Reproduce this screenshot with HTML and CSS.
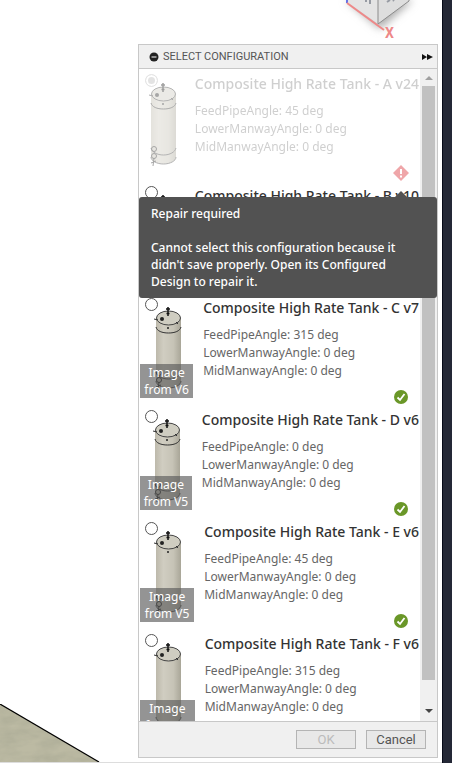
FILE: index.html
```
<!DOCTYPE html>
<html lang="en">

<head>
    <meta charset="UTF-8" />
    <meta name="viewport" content="width=device-width, initial-scale=1.0" />
    <title>Select Configuration</title>
    <link rel="stylesheet" href="styles.css">
</head>

<body>
    <!-- Shared shapes -->
    <svg class="defs" aria-hidden="true">
        <defs>
            <linearGradient id="metal">
                <stop offset="0" stop-color="#bdb9ab" />
                <stop offset="0.3" stop-color="#d0cdc1" />
                <stop offset="0.7" stop-color="#c6c3b6" />
                <stop offset="1" stop-color="#a9a698" />
            </linearGradient>
            <symbol id="tank" viewBox="0 0 32 86">
                <path d="M5 12v63c0 4 6 7 12.500 7S30 79 30 75V12z" fill="url(#metal)" />
                <path d="M5 75c0 4 6 7 12.500 7S30 79 30 75" fill="none" stroke="#444" />
                <ellipse cx="17.500" cy="12" rx="12" ry="7" fill="#cfcdc1" stroke="#444" stroke-width="1" />
                <path d="M17 1v9M15 3h4M15.500 7.500h3" stroke="#111" stroke-width="1.500" />
                <circle cx="11" cy="13" r="2" fill="#222" />
                <path d="M3 13l4 1M25 16l2 2" stroke="#333" />
            </symbol>
            <symbol id="seams" viewBox="0 0 32 86">
                <path d="M5 21c1 4 6 6 12.500 6S29 25 30 21" fill="none" stroke="#333" />
                <path d="M5 66c1 4 6 7 12.500 7S29 70 30 66" fill="none" stroke="#444" />
            </symbol>
            <symbol id="manways" viewBox="0 0 32 86">
                <g fill="none" stroke="#222">
                    <circle cx="8" cy="67" r="2.500" />
                    <circle cx="8" cy="74" r="2.500" />
                    <path d="M8 76l-1 8M5 81l5-2" />
                </g>
                <circle cx="17" cy="22" r="1" fill="#222" />
            </symbol>
            <symbol id="ok" viewBox="0 0 14 14">
                <circle cx="7" cy="7" r="7" fill="#6a9728" />
                <path d="M3.500 7.500l2.500 2.500 4.500-6" fill="none" stroke="#fff" stroke-width="1.800" />
            </symbol>
        </defs>
    </svg>

    <main class="viewport">
        <svg class="view-cube" width="84" height="50" viewBox="0 0 84 50">
            <defs>
                <filter id="soft" x="-30%" y="-30%" width="160%" height="160%">
                    <feGaussianBlur stdDeviation="4" />
                </filter>
            </defs>
            <path d="M10 0L44 29 77 0z" fill="#aaa" filter="url(#soft)" />
            <path d="M11 0v2l31 22V0z" fill="#e4e4e4" />
            <path d="M42 0v24L73 1V0z" fill="#dedede" />
            <path d="M42 0v24L73 1V0" fill="none" stroke="#8c8c8c" />
            <path d="M30 0v2M34 0v4M51 2l3-2M57 0l1 1" stroke="#979ba3" stroke-width="2" />
            <path d="M11 0v3" stroke="#6672e8" stroke-width="2" />
            <path d="M11 3l37 27" stroke="#ee8888" stroke-width="2" />
            <text x="49" y="38">X</text>
        </svg>

        <svg class="ground" width="100" height="58" viewBox="0 0 100 58">
            <defs>
                <filter id="grain">
                    <feTurbulence type="fractalNoise" baseFrequency="0.05 0.120" numOctaves="3" />
                    <feColorMatrix values="0 0 0 0 0.400  0 0 0 0 0.400  0 0 0 0 0.300  1.200 0 0 0 -0.350" />
                    <feComposite in2="SourceGraphic" operator="in" />
                </filter>
            </defs>
            <path d="M0 0l99 58H0z" fill="#bcbaa3" />
            <path d="M0 0l99 58H0z" filter="url(#grain)" />
            <path d="M0 0l99 58" stroke="#000" stroke-width="1.200" />
        </svg>

        <section class="panel">
            <header class="panel-header">
                <svg width="10" height="10" viewBox="0 0 10 10">
                    <circle cx="5" cy="5" r="4.500" fill="#222" />
                    <path d="M2.500 5h5" stroke="#fff" />
                </svg>
                <h1>SELECT CONFIGURATION</h1>
                <svg class="forward" width="11" height="8" viewBox="0 0 11 8">
                    <path d="M0 1l5 3-5 3zM5 1l6 3-6 3z" fill="#111" />
                </svg>
            </header>

            <div class="panel-body">
                <div class="config-list">
                    <label class="config broken">
                        <input type="radio" name="config" checked disabled>
                        <span class="thumb">
                            <svg class="tank"><use href="#tank" /><use href="#seams" /><use href="#manways" /></svg>
                        </span>
                        <span class="info">
                            <strong>Composite High Rate Tank - A v24</strong>
                            <span class="props">FeedPipeAngle: 45 deg<br>LowerManwayAngle: 0 deg<br>MidManwayAngle: 0 deg</span>
                            <svg class="status" viewBox="0 0 16 16">
                                <path d="M8 0l8 8-8 8-8-8z" fill="#d8232a" />
                                <path d="M8 4v5M8 10.500v2" stroke="#fff" stroke-width="2" />
                            </svg>
                        </span>
                    </label>

                    <label class="config">
                        <input type="radio" name="config">
                        <span class="thumb">
                            <svg class="tank"><use href="#tank" /><use href="#seams" /><use href="#manways" /></svg>
                        </span>
                        <span class="info">
                            <strong>Composite High Rate Tank - B v10</strong>
                        </span>
                    </label>

                    <label class="config">
                        <input type="radio" name="config">
                        <span class="thumb">
                            <svg class="tank"><use href="#tank" /><use href="#seams" /><use href="#manways" /></svg>
                            <span class="from">Image<br>from V6</span>
                        </span>
                        <span class="info">
                            <strong>Composite High Rate Tank - C v7</strong>
                            <span class="props">FeedPipeAngle: 315 deg<br>LowerManwayAngle: 0 deg<br>MidManwayAngle: 0 deg</span>
                            <svg class="status"><use href="#ok" /></svg>
                        </span>
                    </label>

                    <label class="config">
                        <input type="radio" name="config">
                        <span class="thumb">
                            <svg class="tank"><use href="#tank" /><use href="#seams" /><use href="#manways" /></svg>
                            <span class="from">Image<br>from V5</span>
                        </span>
                        <span class="info">
                            <strong>Composite High Rate Tank - D v6</strong>
                            <span class="props">FeedPipeAngle: 0 deg<br>LowerManwayAngle: 0 deg<br>MidManwayAngle: 0 deg</span>
                            <svg class="status"><use href="#ok" /></svg>
                        </span>
                    </label>

                    <label class="config">
                        <input type="radio" name="config">
                        <span class="thumb">
                            <svg class="tank"><use href="#tank" /><use href="#manways" /></svg>
                            <span class="from">Image<br>from V5</span>
                        </span>
                        <span class="info">
                            <strong>Composite High Rate Tank - E v6</strong>
                            <span class="props">FeedPipeAngle: 45 deg<br>LowerManwayAngle: 0 deg<br>MidManwayAngle: 0 deg</span>
                            <svg class="status"><use href="#ok" /></svg>
                        </span>
                    </label>

                    <label class="config">
                        <input type="radio" name="config">
                        <span class="thumb">
                            <svg class="tank"><use href="#tank" /></svg>
                            <span class="from">Image<br>from V5</span>
                        </span>
                        <span class="info">
                            <strong>Composite High Rate Tank - F v6</strong>
                            <span class="props">FeedPipeAngle: 315 deg<br>LowerManwayAngle: 0 deg<br>MidManwayAngle: 0 deg</span>
                            <svg class="status"><use href="#ok" /></svg>
                        </span>
                    </label>
                </div>

                <div class="scrollbar">
                    <svg width="8" height="4" viewBox="0 0 8 4"><path d="M4 0l4 4H0z" fill="#a0a0a0" /></svg>
                    <div class="scroll-thumb"></div>
                    <svg width="8" height="4" viewBox="0 0 8 4"><path d="M0 0h8L4 4z" fill="#444" /></svg>
                </div>

                <div class="tooltip" role="tooltip">
                    <p>Repair required</p>
                    <p>Cannot select this configuration because it didn't save properly. Open its Configured Design to repair it.</p>
                </div>
            </div>

            <footer class="panel-footer">
                <button type="button" disabled>OK</button>
                <button type="button">Cancel</button>
            </footer>
        </section>
    </main>

    <aside class="side-strip"></aside>
</body>

</html>
```
FILE: styles.css
```
:root {
    --line: #c8c8c8;
    --chrome: #f0f0f0;
    --text: #333;
    --muted: #666;
    --tooltip: #525252;
}

* {
    margin: 0;
    padding: 0;
    box-sizing: border-box;
}

body {
    display: flex;
    height: 100vh;
    overflow: hidden;
    background: #fff;
    color: var(--text);
    font-family: "Noto Sans", sans-serif;
}

svg {
    display: block;
    flex: none;
}

.defs {
    position: absolute;
    width: 0;
    height: 0;
}

.viewport {
    position: relative;
    flex: 1;
    display: flex;
    padding: 44px 4px 4px 0;
    border-bottom: 1px solid #ddd;
}

.view-cube {
    position: absolute;
    top: 0;
    right: 22px;
}

.view-cube text {
    font-family: Roboto, sans-serif;
    font-size: 14px;
    font-weight: 700;
    fill: #ee8888;
}

.ground {
    position: absolute;
    left: 0;
    bottom: 0;
}

.side-strip {
    width: 10px;
    border-left: 1px solid #060a18;
    background: #242836;
}

/* Panel */
.panel {
    position: relative;
    display: flex;
    flex-direction: column;
    width: 300px;
    margin-left: auto;
    border: 1px solid var(--line);
    background: #fff;
}

.panel-header {
    display: flex;
    align-items: center;
    gap: 4px;
    height: 24px;
    padding: 0 4px 0 10px;
    border-bottom: 1px solid var(--line);
    background: var(--chrome);
}

.panel-header h1 {
    font-family: Roboto, sans-serif;
    font-size: 11px;
    font-weight: 400;
    color: #555;
}

.forward {
    margin-left: auto;
}

.panel-body {
    position: relative;
    flex: 1;
    display: flex;
    min-height: 0;
}

.config-list {
    flex: 1;
    overflow: hidden;
}

.config {
    position: relative;
    display: flex;
    gap: 10px;
    height: 112px;
    padding-left: 1px;
}

.config input {
    position: absolute;
    top: 5px;
    left: 6px;
    z-index: 1;
    width: 13px;
    height: 13px;
    appearance: none;
    border: 1px solid #555;
    border-radius: 50%;
    background: #fff;
}

.config input:checked {
    border-color: #bbb;
    background: #bbb;
    box-shadow: inset 0 0 0 2px #fff;
}

.broken {
    opacity: 0.4;
}

.broken strong,
.broken .props {
    color: #888;
}

.thumb {
    position: relative;
    flex: 1;
    height: 105px;
    padding-top: 13px;
}

.tank {
    width: 32px;
    height: 86px;
    margin: 0 auto;
}

.from {
    position: absolute;
    left: 0;
    right: 0;
    bottom: 0;
    background: rgba(90, 90, 90, 0.65);
    color: #fff;
    font-size: 12px;
    line-height: 17px;
    text-align: center;
}

.info {
    padding: 6px 1px 0 0;
    white-space: nowrap;
}

.info strong {
    display: block;
    font-size: 14px;
    font-weight: 500;
    line-height: 18px;
}

.props {
    display: block;
    margin-top: 9px;
    color: var(--muted);
    font-size: 12px;
    line-height: 18px;
}

.status {
    width: 14px;
    height: 14px;
    margin: 10px 11px 0 auto;
}

.broken .status {
    width: 16px;
    height: 16px;
    margin: 9px 10px 0 auto;
}

.scrollbar {
    display: flex;
    flex-direction: column;
    align-items: center;
    gap: 6px;
    width: 17px;
    padding: 7px 0 8px;
    background: var(--chrome);
}

.scroll-thumb {
    flex: 1;
    width: 13px;
    margin-bottom: 23px;
    background: #c1c1c1;
}

/* Tooltip */
.tooltip {
    position: absolute;
    top: 128px;
    left: 0;
    right: 0;
    z-index: 2;
    padding: 8px 12px;
    border-radius: 3px;
    background: var(--tooltip);
    color: #fff;
    font-size: 12px;
    font-weight: 500;
    line-height: 17px;
}

.tooltip::before {
    content: "";
    position: absolute;
    top: -6px;
    right: 30px;
    border: 6px solid transparent;
    border-top: 0;
    border-bottom-color: var(--tooltip);
}

.tooltip p + p {
    margin-top: 17px;
    max-width: 262px;
}

/* Footer */
.panel-footer {
    display: flex;
    justify-content: flex-end;
    gap: 10px;
    padding: 8px 11px;
    border-top: 1px solid var(--line);
    background: var(--chrome);
}

.panel-footer button {
    width: 60px;
    height: 19px;
    border: 1px solid #b4b4b4;
    background: #e8e8e8;
    color: #555;
    font-family: Roboto, sans-serif;
    font-size: 13px;
    line-height: 17px;
}

.panel-footer button:disabled {
    color: #bbb;
}
```
